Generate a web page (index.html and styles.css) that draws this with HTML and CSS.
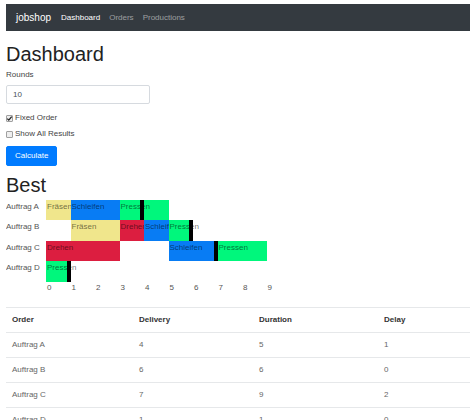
FILE: index.html
```html
<!DOCTYPE html>
<html lang="de">
<head>
<meta charset="utf-8">
<title>jobshop</title>
<link rel="stylesheet" href="styles.css">
</head>
<body>
<nav class="navbar">
  <span class="brand">jobshop</span>
  <a class="nav-link active">Dashboard</a>
  <a class="nav-link">Orders</a>
  <a class="nav-link">Productions</a>
</nav>
<main class="content">
  <h1 class="title">Dashboard</h1>
  <div class="form-group">
    <label class="label">Rounds</label>
    <div class="input">10</div>
  </div>
  <div class="check-row"><span class="check"><svg viewBox="0 0 7 7" width="7" height="7"><path d="M1.3 3.6 L2.8 5.1 L5.7 1.6" fill="none" stroke="#222" stroke-width="1.3"/></svg></span>Fixed Order</div>
  <div class="check-row"><span class="check"></span>Show All Results</div>
  <button class="btn">Calculate</button>
  <h1 class="title best">Best</h1>
  <div class="gantt">
    <div class="g-row">
      <div class="g-label">Auftrag A</div>
      <div class="g-track">
        <div class="bar fr" style="left:0;width:24.5px">Fräsen</div>
        <div class="bar sc" style="left:24.5px;width:49px">Schleifen</div>
        <div class="bar pr" style="left:73.5px;width:49px">Pressen</div>
        <div class="marker" style="left:94px"></div>
      </div>
    </div>
    <div class="g-row">
      <div class="g-label">Auftrag B</div>
      <div class="g-track">
        <div class="bar fr" style="left:24.5px;width:49px">Fräsen</div>
        <div class="bar dr clip" style="left:73.5px;width:24.5px">Drehen</div>
        <div class="bar sc clip" style="left:98px;width:24.5px">Schleifen</div>
        <div class="bar pr" style="left:122.5px;width:24.5px">Pressen</div>
        <div class="marker" style="left:143px"></div>
      </div>
    </div>
    <div class="g-row">
      <div class="g-label">Auftrag C</div>
      <div class="g-track">
        <div class="bar dr" style="left:0;width:73.5px">Drehen</div>
        <div class="bar sc" style="left:122.5px;width:49px">Schleifen</div>
        <div class="bar pr" style="left:171.5px;width:49px">Pressen</div>
        <div class="marker" style="left:167.5px"></div>
      </div>
    </div>
    <div class="g-row">
      <div class="g-label">Auftrag D</div>
      <div class="g-track">
        <div class="bar pr" style="left:0;width:24.5px">Pressen</div>
        <div class="marker" style="left:20.5px"></div>
      </div>
    </div>
    <div class="g-axis">
      <span>0</span><span>1</span><span>2</span><span>3</span><span>4</span><span>5</span><span>6</span><span>7</span><span>8</span><span>9</span>
    </div>
  </div>
  <table class="table">
    <thead>
      <tr><th class="c1">Order</th><th class="c2">Delivery</th><th class="c3">Duration</th><th class="c4">Delay</th></tr>
    </thead>
    <tbody>
      <tr><td>Auftrag A</td><td>4</td><td>5</td><td>1</td></tr>
      <tr><td>Auftrag B</td><td>6</td><td>6</td><td>0</td></tr>
      <tr><td>Auftrag C</td><td>7</td><td>9</td><td>2</td></tr>
      <tr><td>Auftrag D</td><td>1</td><td>1</td><td>0</td></tr>
    </tbody>
  </table>
</main>
</body>
</html>
```
FILE: styles.css
```css
html, body {
  background: #fff;
}
body {
  margin: 4px 4px 0 6px;
  font-family: "Liberation Sans", Arial, sans-serif;
  font-size: 8px;
  line-height: 12px;
  color: #444;
}
.navbar {
  display: flex;
  align-items: center;
  height: 27px;
  background: #343a40;
  padding: 0 10px;
}
.brand {
  font-size: 10px;
  color: #fff;
  margin-right: 5.5px;
}
.nav-link {
  font-size: 8px;
  padding: 0 4.5px;
  color: rgba(255, 255, 255, 0.5);
}
.nav-link.active {
  color: #fff;
}
.title {
  font-size: 20px;
  line-height: 24px;
  font-weight: 400;
  color: #222;
  margin: 11px 0 3px;
}
.label {
  display: block;
  margin-bottom: 4px;
  color: #444;
}
.form-group {
  margin-bottom: 8px;
}
.input {
  box-sizing: border-box;
  width: 144px;
  height: 19px;
  line-height: 17px;
  border: 1px solid #d6dadf;
  border-radius: 2px;
  padding: 0 6px;
  color: #495057;
}
.check-row {
  display: flex;
  align-items: center;
  height: 12px;
  margin-bottom: 4.4px;
  color: #444;
}
.check {
  box-sizing: border-box;
  width: 7px;
  height: 7px;
  border: 1px solid #a0a0a0;
  border-radius: 1px;
  background: #eee;
  margin-right: 2px;
  display: flex;
}
.check svg {
  display: block;
  margin: -1px;
}
.btn {
  display: block;
  margin-top: 5.6px;
  height: 20px;
  padding: 0 8px;
  border: 1px solid #007bff;
  border-radius: 2px;
  background: #007bff;
  color: #fff;
  font-family: inherit;
  font-size: 8px;
}
.best {
  margin-top: 7px;
  margin-bottom: 3px;
}
.gantt {
  width: 270px;
}
.g-row {
  display: flex;
  height: 20.5px;
}
.g-label {
  width: 40px;
  padding-top: 1px;
  color: #555;
}
.g-track {
  position: relative;
  width: 220.5px;
}
.bar {
  position: absolute;
  top: 0;
  bottom: 0;
  box-sizing: border-box;
  padding: 1px 0 0 1px;
  white-space: nowrap;
  color: rgba(0, 0, 0, 0.55);
}
.bar.clip {
  overflow: hidden;
}
.fr { background: #f0e68c; }
.sc { background: #087cf4; }
.pr { background: #00f77c; }
.dr { background: #dc1e40; }
.marker {
  position: absolute;
  top: 0;
  bottom: 0;
  width: 4px;
  background: #000;
}
.g-axis {
  display: flex;
  margin-left: 40px;
  height: 12px;
  color: #555;
}
.g-axis span {
  width: 24.5px;
  flex: none;
  padding-left: 1px;
  box-sizing: border-box;
}
.table {
  margin-top: 13.5px;
  width: 464px;
  border-collapse: collapse;
  table-layout: fixed;
}
.table th,
.table td {
  text-align: left;
  padding: 6px;
  line-height: 12px;
  border-top: 1px solid #e6e8ea;
}
.table th {
  font-weight: 700;
  color: #333;
}
.table td {
  color: #666;
}
.c1 { width: 115px; }
.c2 { width: 108px; }
.c3 { width: 113px; }
.c4 { width: 80px; }
```
